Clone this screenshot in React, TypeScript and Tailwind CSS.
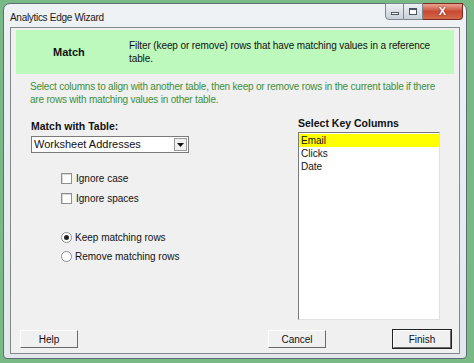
import React from 'react'

const font = { fontFamily: '"Liberation Sans", Arial, sans-serif' }

function Check({ label }: { label: string }) {
  return (
    <div className="flex items-center gap-[4px] h-[20px]">
      <span className="w-[11px] h-[11px] border border-[#8e8f8f] bg-white shadow-[inset_1px_1px_0_#d8d8d8]" />
      <span>{label}</span>
    </div>
  )
}

function Radio({ label, on }: { label: string; on?: boolean }) {
  return (
    <div className="flex items-center gap-[3px] h-[19px]">
      <span className="w-[11px] h-[11px] rounded-full border border-[#8e8f8f] bg-white flex items-center justify-center">
        {on && <span className="w-[5px] h-[5px] rounded-full bg-[#222]" />}
      </span>
      <span>{label}</span>
    </div>
  )
}

function Btn({ label, def }: { label: string; def?: boolean }) {
  return (
    <div
      className={
        'w-[58px] h-[18px] flex items-center justify-center bg-[#f0f0f0] border border-t-white border-l-white border-r-[#696969] border-b-[#696969] ' +
        (def ? 'outline outline-1 outline-[#222]' : '')
      }
    >
      {label}
    </div>
  )
}

export default function App() {
  return (
    <div className="w-[474px] h-[363px] bg-[#79b985] pt-[3px] pl-[3px] text-[10px] text-[#111]" style={font}>
      <div className="w-[464px] h-[356px] rounded-t-[7px] rounded-b-[4px] border border-[#5f6d78] bg-gradient-to-b from-[#eef2f5] to-[#e2e7ec] flex flex-col">
        <div className="h-[23px] flex items-start pl-[6px] relative">
          <span className="mt-[6px] text-[10px] tracking-[-0.3px] text-[#1a1a1a]">Analytics Edge Wizard</span>
          <div className="ml-auto mr-[3px] flex h-[17px] -mt-px">
            <div className="w-[19px] border border-[#7d8791] rounded-bl-[4px] bg-gradient-to-b from-[#eef1f4] to-[#c9d0d8] flex items-center justify-center">
              <span className="w-[8px] h-[3px] border border-[#4a5560] bg-white mt-[4px]" />
            </div>
            <div className="w-[19px] border-y border-r border-[#7d8791] bg-gradient-to-b from-[#eef1f4] to-[#c9d0d8] flex items-center justify-center">
              <span className="w-[8px] h-[7px] border border-[#4a5560] border-t-2 bg-white" />
            </div>
            <div className="w-[40px] border-y border-r border-[#7a2a1f] rounded-br-[4px] bg-gradient-to-b from-[#e9a394] via-[#c94a33] to-[#d46a4a] flex items-center justify-center">
              <span className="text-white font-bold text-[11px] leading-none" style={{ textShadow: '0 0 2px #6b1a0e' }}>X</span>
            </div>
          </div>
        </div>
        <div className="mx-[6px] mb-[4px] flex-1 border border-[#83888d] bg-[#f0f0f0] flex flex-col px-[5px] pt-[2px]">
          <div className="h-[44px] bg-[#bdf9bd] flex items-center">
            <div className="w-[113px] pl-[37px] font-bold text-[11px]">Match</div>
            <div className="w-[318px] leading-[13px] tracking-[-0.1px]">
              Filter (keep or remove) rows that have matching values in a reference table.
            </div>
          </div>
          <div className="mt-[6px] pl-[14px] pr-[16px] text-[#3c8f3c] leading-[13px] tracking-[-0.2px]">
            Select columns to align with another table, then keep or remove rows in the current table if there are rows with matching values in other table.
          </div>
          <div className="flex mt-[13px] flex-1">
            <div className="w-[282px] pl-[15px]">
              <div className="font-bold text-[10.5px] h-[17px]">Match with Table:</div>
              <div className="w-[158px] h-[17px] border border-[#7a7a7a] bg-white flex items-center text-[11px]">
                <span className="pl-[2px] flex-1">Worksheet Addresses</span>
                <span className="w-[13px] h-[13px] mr-px border border-[#9a9a9a] bg-[#f0f0f0] flex items-center justify-center">
                  <svg width="7" height="4" viewBox="0 0 7 4"><path d="M0 0h7L3.5 4z" fill="#111" /></svg>
                </span>
              </div>
              <div className="pl-[30px] mt-[15px]">
                <Check label="Ignore case" />
                <Check label="Ignore spaces" />
                <div className="h-[20px]" />
                <Radio label="Keep matching rows" on />
                <Radio label="Remove matching rows" />
              </div>
            </div>
            <div className="flex flex-col">
              <div className="font-bold text-[10.5px] h-[14px] -mt-[3px] mb-[2px]">Select Key Columns</div>
              <div className="w-[142px] h-[188px] border border-t-[#7a7a7a] border-l-[#7a7a7a] border-r-[#e0e0e0] border-b-[#e0e0e0] bg-white leading-[13px] pt-px">
                <div className="bg-[#ffff00] px-[2px] h-[13px]">Email</div>
                <div className="px-[2px]">Clicks</div>
                <div className="px-[2px]">Date</div>
              </div>
            </div>
          </div>
          <div className="flex items-center h-[18px] mb-[5px] pl-[4px] pr-[3px]">
            <Btn label="Help" />
            <div className="ml-auto mr-[67px]">
              <Btn label="Cancel" />
            </div>
            <Btn label="Finish" def />
          </div>
        </div>
      </div>
    </div>
  )
}
